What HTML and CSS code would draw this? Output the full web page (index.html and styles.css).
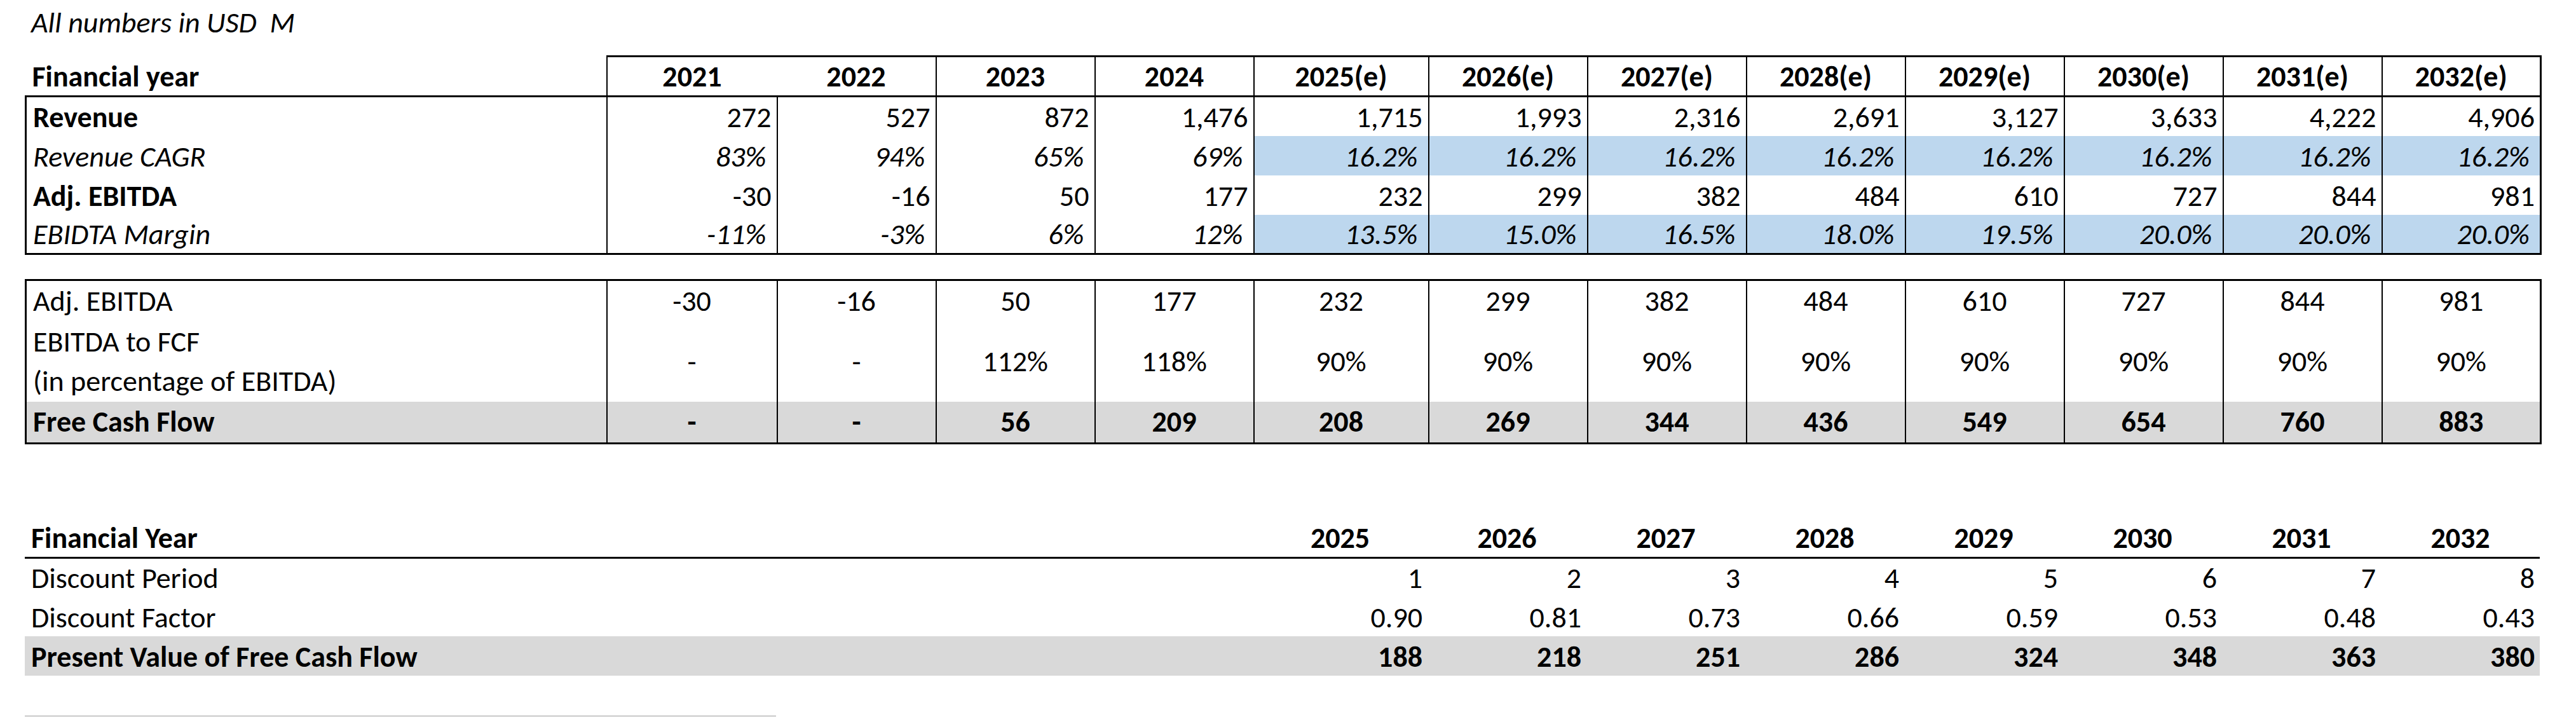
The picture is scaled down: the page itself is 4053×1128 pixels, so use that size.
FILE: index.html
```html
<!DOCTYPE html>
<html>
<head>
<meta charset="utf-8">
<link rel="stylesheet" href="styles.css">
</head>
<body>
<div class="sheet">
  <div class="note">All numbers in USD&nbsp; M</div>

  <table class="grid t1">
    <colgroup>
      <col class="c-label"><col class="c-2021"><col class="c-y"><col class="c-y"><col class="c-y"><col class="c-2025"><col class="c-y"><col class="c-y"><col class="c-y"><col class="c-y"><col class="c-y"><col class="c-y"><col class="c-y">
    </colgroup>
    <thead>
      <tr class="hrow">
        <th class="lbl">Financial year</th>
        <th class="yr">2021</th>
        <th class="yr nob">2022</th>
        <th class="yr">2023</th>
        <th class="yr">2024</th>
        <th class="yr">2025(e)</th>
        <th class="yr">2026(e)</th>
        <th class="yr">2027(e)</th>
        <th class="yr">2028(e)</th>
        <th class="yr">2029(e)</th>
        <th class="yr">2030(e)</th>
        <th class="yr">2031(e)</th>
        <th class="yr last">2032(e)</th>
      </tr>
    </thead>
    <tbody>
      <tr>
        <td class="lbl b">Revenue</td>
        <td>272</td><td>527</td><td>872</td><td>1,476</td><td>1,715</td><td>1,993</td><td>2,316</td><td>2,691</td><td>3,127</td><td>3,633</td><td>4,222</td><td class="last">4,906</td>
      </tr>
      <tr class="pct">
        <td class="lbl">Revenue CAGR</td>
        <td>83%</td><td>94%</td><td>65%</td><td>69%</td>
        <td class="blue">16.2%</td><td class="blue">16.2%</td><td class="blue">16.2%</td><td class="blue">16.2%</td><td class="blue">16.2%</td><td class="blue">16.2%</td><td class="blue">16.2%</td><td class="blue last">16.2%</td>
      </tr>
      <tr>
        <td class="lbl b">Adj. EBITDA</td>
        <td>-30</td><td>-16</td><td>50</td><td>177</td><td>232</td><td>299</td><td>382</td><td>484</td><td>610</td><td>727</td><td>844</td><td class="last">981</td>
      </tr>
      <tr class="pct lastrow">
        <td class="lbl">EBIDTA Margin</td>
        <td>-11%</td><td>-3%</td><td>6%</td><td>12%</td>
        <td class="blue">13.5%</td><td class="blue">15.0%</td><td class="blue">16.5%</td><td class="blue">18.0%</td><td class="blue">19.5%</td><td class="blue">20.0%</td><td class="blue">20.0%</td><td class="blue last">20.0%</td>
      </tr>
    </tbody>
  </table>

  <table class="grid t2">
    <colgroup>
      <col class="c-label"><col class="c-2021"><col class="c-y"><col class="c-y"><col class="c-y"><col class="c-2025"><col class="c-y"><col class="c-y"><col class="c-y"><col class="c-y"><col class="c-y"><col class="c-y"><col class="c-y">
    </colgroup>
    <tbody>
      <tr class="firstrow">
        <td class="lbl">Adj. EBITDA</td>
        <td>-30</td><td>-16</td><td>50</td><td>177</td><td>232</td><td>299</td><td>382</td><td>484</td><td>610</td><td>727</td><td>844</td><td class="last">981</td>
      </tr>
      <tr class="tall">
        <td class="lbl">EBITDA to FCF<br>(in percentage of EBITDA)</td>
        <td>-</td><td>-</td><td>112%</td><td>118%</td><td>90%</td><td>90%</td><td>90%</td><td>90%</td><td>90%</td><td>90%</td><td>90%</td><td class="last">90%</td>
      </tr>
      <tr class="grey b lastrow">
        <td class="lbl">Free Cash Flow</td>
        <td>-</td><td>-</td><td>56</td><td>209</td><td>208</td><td>269</td><td>344</td><td>436</td><td>549</td><td>654</td><td>760</td><td class="last">883</td>
      </tr>
    </tbody>
  </table>

  <table class="grid t3">
    <colgroup>
      <col class="c-label"><col class="c-2021"><col class="c-y"><col class="c-y"><col class="c-y"><col class="c-2025"><col class="c-y"><col class="c-y"><col class="c-y"><col class="c-y"><col class="c-y"><col class="c-y"><col class="c-y">
    </colgroup>
    <thead>
      <tr class="hrow">
        <th class="lbl" colspan="5">Financial Year</th>
        <th class="yr">2025</th><th class="yr">2026</th><th class="yr">2027</th><th class="yr">2028</th><th class="yr">2029</th><th class="yr">2030</th><th class="yr">2031</th><th class="yr">2032</th>
      </tr>
    </thead>
    <tbody>
      <tr>
        <td class="lbl" colspan="5">Discount Period</td>
        <td>1</td><td>2</td><td>3</td><td>4</td><td>5</td><td>6</td><td>7</td><td>8</td>
      </tr>
      <tr>
        <td class="lbl" colspan="5">Discount Factor</td>
        <td>0.90</td><td>0.81</td><td>0.73</td><td>0.66</td><td>0.59</td><td>0.53</td><td>0.48</td><td>0.43</td>
      </tr>
      <tr class="grey b">
        <td class="lbl" colspan="5">Present Value of Free Cash Flow</td>
        <td>188</td><td>218</td><td>251</td><td>286</td><td>324</td><td>348</td><td>363</td><td>380</td>
      </tr>
    </tbody>
  </table>

  <div class="strip"></div>
</div>
</body>
</html>
```

FILE: styles.css
```css
html, body {
  margin: 0;
  padding: 0;
  overflow: hidden;
  background: #ffffff;
}

body {
  font-family: Carlito, Calibri, Lato, "Liberation Sans", sans-serif;
  font-size: 46px;
  color: #000000;
}

.sheet {
  padding-left: 39px;
}

.note {
  font-style: italic;
  height: 66px;
  line-height: 62px;
  padding-top: 4px;
  padding-left: 10px;
  box-sizing: border-box;
}

.grid {
  border-collapse: collapse;
  table-layout: fixed;
  width: 3955px;
}

.c-label { width: 914px; }
.c-2021 { width: 268px; }
.c-y { width: 250px; }
.c-2025 { width: 275px; }

.grid th,
.grid td {
  padding: 0 8px 2px 8px;
  white-space: nowrap;
  vertical-align: bottom;
  text-align: right;
  font-weight: normal;
  line-height: 56px;
}

.grid .lbl {
  text-align: left;
  padding-left: 10px;
}

.b td,
td.b {
  font-weight: bold;
}

/* ---------- table 1 ---------- */
.t1 {
  margin-top: 21px;
}

.t1 tr {
  height: 62px;
}

.t1 .hrow {
  height: 63px;
}

.t1 th {
  font-weight: bold;
  border-bottom: 3px solid #000;
}

.t1 th.yr {
  text-align: center;
  border-top: 3px solid #000;
  border-left: 2px solid #000;
}

.t1 th.nob {
  border-left: none;
}

.t1 th.last,
.t1 td.last {
  border-right: 3px solid #000;
}

.t1 td {
  border-left: 2px solid #000;
}

.t1 td.lbl {
  border-left: 3px solid #000;
}

.t1 .lastrow td {
  border-bottom: 3px solid #000;
}

.t1 .pct td {
  font-style: italic;
  padding-right: 16px;
}

.t1 .pct td.lbl {
  padding-right: 8px;
}

.blue {
  background: #bdd7ee;
}

/* ---------- table 2 ---------- */
.t2 {
  margin-top: 38px;
}

.t2 tr {
  height: 62px;
}

.t2 .firstrow {
  height: 63px;
}

.t2 .tall {
  height: 121px;
}

.t2 td {
  text-align: center;
  vertical-align: middle;
  border-left: 2px solid #000;
}

.t2 td.lbl {
  text-align: left;
  border-left: 3px solid #000;
  line-height: 62px;
}

.t2 .firstrow td {
  border-top: 3px solid #000;
}

.t2 .lastrow td {
  border-bottom: 3px solid #000;
}

.t2 td.last {
  border-right: 3px solid #000;
}

.grey td {
  background: #d9d9d9;
}

/* ---------- table 3 ---------- */
.t3 {
  margin-top: 116px;
}

.t3 tr {
  height: 62px;
}

.t3 th {
  font-weight: bold;
  border-bottom: 3px solid #000;
}

.t3 th.yr {
  text-align: center;
}

/* ---------- bottom strip ---------- */
.strip {
  width: 1182px;
  height: 20px;
  margin-top: 62px;
  background: #d9d9d9;
}
```
